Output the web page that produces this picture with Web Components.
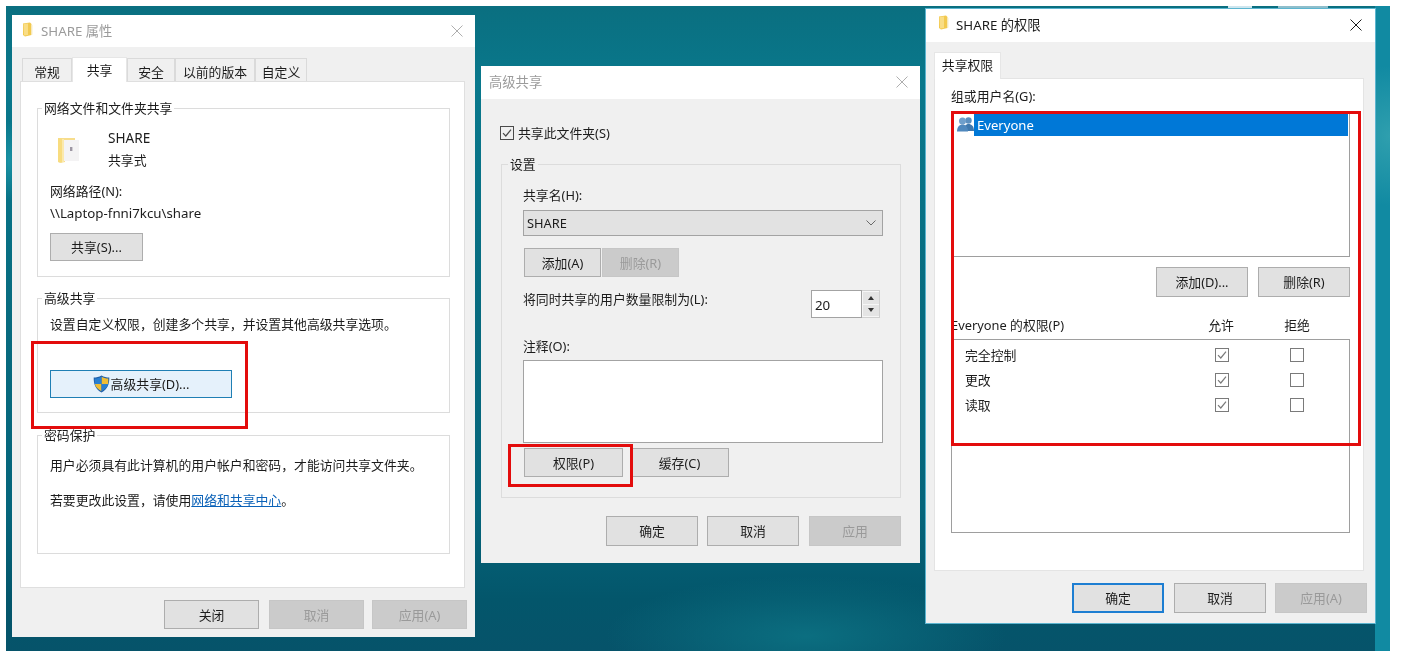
<!DOCTYPE html>
<html lang="zh-CN">
<head>
<meta charset="utf-8">
<title>SHARE</title>
<style>
html,body{margin:0;padding:0;background:#fff;width:1401px;height:659px;overflow:hidden}
</style>
</head>
<body>
<share-desktop></share-desktop>
<script>
const base = `:host{display:block;box-sizing:border-box}*,*::before,*::after{box-sizing:border-box}`;
function def(name, css, html){
  customElements.define(name, class extends HTMLElement{
    constructor(){super();
      const r=this.attachShadow({mode:'open'});
      r.innerHTML='<style>'+base+css+'</style>'+(typeof html==='function'?html(this):html);
    }
    connectedCallback(){
      const h=this.shadowRoot.querySelector('[data-heading]');
      if(h) h.textContent=this.getAttribute('heading')||'';
    }
  });
}

const FOLDER_SMALL = `<svg width="11" height="15" viewBox="0 0 11 15"><path d="M1 1.500 L8 .5 L9.500 2 V13 L3 14.500 L1 13 Z" fill="#f2c94f"/><path d="M1.500 2 L6 1.500 V13 L2 13.500 Z" fill="#f9dd85"/><path d="M9.500 2.500 L10.500 3 V12.500 L9.500 13 Z" fill="#f6eecf"/></svg>`;
const FOLDER_BIG = `<svg width="24" height="30" viewBox="0 0 24 30"><path d="M1 3 H18 V5 H8 V27 L3 28 L1 27 Z" fill="#f7dd8c"/><path d="M5 5 H22 V26 H5 Z" fill="#f4f3f4"/><path d="M1 3.500 H5 V27.500 L1 26.500 Z" fill="#f8dc7f"/><path d="M5 4 H7 V27 H5 Z" fill="#fbe9ad"/><rect x="13" y="12" width="2.400" height="4" fill="#9d97a3"/></svg>`;
const SHIELD = `<svg width="17" height="18" viewBox="0 0 17 18"><path d="M8.500 .5 C11 2 13.500 2.600 16.300 2.600 C16.500 9 14.500 14.500 8.500 17.500 C2.500 14.500 .5 9 .7 2.600 C3.500 2.600 6 2 8.500 .5Z" fill="#1f5fa8"/><path d="M8.500 1.800 V9 H15.100 C15.300 6.900 15.300 5.200 15.300 3.600 C12.700 3.500 10.600 2.900 8.500 1.800Z" fill="#f0bd34"/><path d="M8.500 9 V16.300 C4.400 14.100 2.400 11.800 1.900 9Z" fill="#f0bd34"/><path d="M8.500 1.800 V9 H1.900 C1.700 6.900 1.700 5.200 1.700 3.600 C4.300 3.500 6.400 2.900 8.500 1.800Z" fill="#2a7fd0"/><path d="M8.500 9 V16.300 C12.600 14.100 14.600 11.800 15.100 9Z" fill="#2a7fd0"/></svg>`;
const USERS = `<svg width="17" height="15" viewBox="0 0 17 15"><circle cx="11.500" cy="3.500" r="3.200" fill="#5c8fbf"/><path d="M7 13 C7 9 9 7 11.500 7 C14.500 7 17 9 17 14 H8Z" fill="#3f78ad"/><circle cx="5.500" cy="4" r="3.500" fill="#6f9fcb"/><path d="M0 14.500 C0 10 2.500 7.500 5.500 7.500 C8.500 7.500 11 10 11 14.500Z" fill="#4f88bd"/></svg>`;

def('win-close', `:host{width:12px;height:12px;color:inherit}svg{display:block}`,
  `<svg width="12" height="12" viewBox="0 0 12 12"><path d="M.5 .5 L11.500 11.500 M11.500 .5 L.5 11.500" stroke="currentColor" stroke-width="1" fill="none"/></svg>`);

def('win-frame', `
  :host{position:absolute;background:#f0f0f0;display:flex;flex-direction:column;font:12.85px/18px "Noto Sans","Noto Sans CJK SC",sans-serif;color:#1c1c1c}
  .bar{flex:none;height:var(--bar,33px);background:#fff;display:flex;align-items:center;padding-left:var(--bar-pad,8px);padding-right:var(--close-pad,12px);padding-bottom:var(--bar-up,2px);color:#1c1c1c}
  :host([inactive]) .bar{color:#9b9b9b}
  :host([inactive]) win-close{color:#aeaeae}
  .title{flex:1;font-size:13.300px}
  slot[name=icon]{display:block}
  ::slotted([slot=icon]){margin-right:var(--icon-gap,8px);line-height:0}
  win-close{flex:none}
`, `<div class="bar"><slot name="icon"></slot><span class="title" data-heading></span><win-close></win-close></div><slot></slot>`);

def('win-button', `
  :host{display:flex;align-items:center;justify-content:center;background:#e1e1e1;border:1px solid #adadad;color:#1c1c1c;height:29px;white-space:nowrap}
  :host([disabled]){background:#cbcbcb;border-color:#c6c6c6;color:#9a9a9a}
  :host([hot]){background:#e5f1fb;border-color:#1f7fb4}
  :host([focused]){border:2px solid #1d7ed2}
`, `<slot name="icon"></slot><slot></slot>`);

def('win-group', `
  fieldset{margin:0;height:100%;border:1px solid #dcdcdc;padding:0 var(--gpad,12px);min-width:0}
  legend{margin-left:var(--lm,-8px);padding:0 2px;line-height:18px;height:18px}
`, `<fieldset><legend data-heading></legend><slot></slot></fieldset>`);

def('win-check', `
  :host{width:14px;height:14px;border:1px solid var(--c,#707070);flex:none}
  svg{display:none;width:12px;height:12px}
  :host([checked]) svg{display:block}
`, `<svg viewBox="0 0 12 12"><path d="M2 6.200 L4.800 9 L10 2.600" fill="none" stroke="var(--c,#707070)" stroke-width="1.200"/></svg>`);

def('win-tab', `
  :host{display:flex;align-items:center;justify-content:center;height:23px;padding-top:3px;background:#f0f0f0;border:1px solid #dadada;border-bottom:0;white-space:nowrap}
  :host([selected]){height:25px;margin-bottom:-1px;background:#fff;padding-top:0;position:relative;z-index:2;border-color:#e6e6e6}
`, `<slot></slot>`);

def('win-combo', `
  :host{display:flex;align-items:center;height:26px;background:#e2e2e2;border:1px solid #a3a3a3;padding:0 4px 0 3px}
  .v{flex:1}
  svg{flex:none;margin-right:2px}
`, `<span class="v"><slot></slot></span><svg width="10" height="6" viewBox="0 0 10 6"><path d="M.5 .5 L5 5 L9.500 .5" stroke="#6a6a6a" fill="none"/></svg>`);

def('win-spin', `
  :host{display:flex;height:28px;width:69px}
  .v{width:51px;background:#fff;border:1px solid #a3a3a3;padding:2px 0 0 3px;line-height:24px;font-size:13.300px}
  .a{width:18px;display:flex;flex-direction:column;gap:1px;padding:1px 0 1px 1px;background:#f6f6f6;border:1px solid #cfcfcf;border-left:0}
  .a div{flex:1;background:#e4e4e4;display:flex;align-items:center;justify-content:center}
  .up{width:0;height:0;border:3.500px solid transparent;border-top:0;border-bottom:4px solid #333}
  .dn{width:0;height:0;border:3.500px solid transparent;border-bottom:0;border-top:4px solid #333}
`, `<div class="v"><slot></slot></div><div class="a"><div><i class="up"></i></div><div><i class="dn"></i></div></div>`);

def('win-listbox', `:host{background:#fff;border:1px solid #9e9e9e}`, `<slot></slot>`);

def('user-row', `
  :host{display:flex;height:22px;padding:0 0 0 5px;margin-right:1px}
  .i{width:17px;flex:none;padding-top:3px;line-height:0}
  .t{flex:1;background:#0078d7;color:#fff;padding-left:3px;line-height:23px;font-size:13.100px}
`, `<span class="i">${USERS}</span><span class="t"><slot></slot></span>`);

def('perm-row', `
  :host{display:grid;grid-template-columns:1fr 74px 76px;height:25px;align-items:center;justify-items:center;padding-left:13px;padding-right:14px}
  .n{justify-self:start}
`, h=>`<span class="n"><slot></slot></span><win-check style="--c:#7a7a7a" ${h.hasAttribute('allow')?'checked':''}></win-check><win-check style="--c:#7a7a7a"></win-check>`);

def('red-mark', `:host{position:absolute;border:3px solid #e30c0c;pointer-events:none;z-index:5}`, ``);

def('props-dialog', `
  .strip{display:flex;align-items:flex-end;height:34px;padding-left:10px;position:relative;z-index:2}
  .panel{margin:0 10px 0 8px;height:507px;background:#fff;border:1px solid #dfdfdf;padding:17px 14px 0 16px}
  win-group{height:178px}
  .g2{height:124px;margin-top:12px}
  .g3{height:128px;margin-top:13px}
  .head{display:flex;padding-top:10px}
  .ic{width:58px;padding:8px 0 0 7px;line-height:0}
  .l{line-height:22px;white-space:nowrap}
  .big{font-size:13.600px}
  .path{font-size:13.300px}
  .mt9{margin-top:9px}
  .p6{margin-top:6px}
  .m10{margin-top:10px}
  .m13{margin-top:13px}
  a{color:#0b62b8;text-decoration:underline}
  .share{width:93px;height:28px;margin-top:9px}
  .adv{width:182px;height:28px;margin-top:35px}
  .foot{display:flex;justify-content:flex-end;padding:12px 8px 0 0}
  .foot win-button{width:95px}
  .foot .b2{margin-left:10px}
  .foot .b3{margin-left:8px}
`, `
  <div class="strip">
    <win-tab style="width:50px">常规</win-tab>
    <win-tab selected style="width:55px">共享</win-tab>
    <win-tab style="width:48px">安全</win-tab>
    <win-tab style="width:80px">以前的版本</win-tab>
    <win-tab style="width:52px">自定义</win-tab>
  </div>
  <div class="panel">
    <win-group heading="网络文件和文件夹共享">
      <div class="head"><div class="ic">${FOLDER_BIG}</div><div><div class="l big">SHARE</div><div class="l">共享式</div></div></div>
      <div class="l mt9">网络路径(N):</div>
      <div class="l path">\\\\Laptop-fnni7kcu\\share</div>
      <win-button class="share">共享(S)...</win-button>
    </win-group>
    <win-group class="g2" heading="高级共享">
      <div class="l p6">设置自定义权限，创建多个共享，并设置其他高级共享选项。</div>
      <win-button class="adv" hot><span slot="icon" style="line-height:0;margin-right:1px">${SHIELD}</span>高级共享(D)...</win-button>
    </win-group>
    <win-group class="g3" heading="密码保护">
      <div class="l m10">用户必须具有此计算机的用户帐户和密码，才能访问共享文件夹。</div>
      <div class="l m13">若要更改此设置，请使用<a>网络和共享中心</a>。</div>
    </win-group>
  </div>
  <div class="foot"><win-button>关闭</win-button><win-button class="b2" disabled>取消</win-button><win-button class="b3" disabled>应用(A)</win-button></div>
`);

def('advanced-dialog', `
  :host{padding:0 19px 0 19px}
  .chk{display:flex;align-items:center;height:22px;margin-top:23px;gap:4px;--c:#4a4a4a}
  win-group{height:343px;margin:11px 0 0 1px;--gpad:21px;--lm:-15px}
  .l{line-height:22px;white-space:nowrap}
  .m11{margin-top:11px}
  win-combo{margin-top:4px;width:360px}
  .row{display:flex;margin:12px 0 0 1px}
  .row win-button{height:29px;width:77px}
  .row win-button+win-button{margin-left:1px}
  .lim{display:flex;justify-content:space-between;width:357px;height:28px;margin-top:13px;line-height:18px}
  .m17{margin-top:17px}
  .memo{margin-top:3px;width:360px;height:83px;background:#fff;border:1px solid #a3a3a3}
  .row2{display:flex;margin:5px 0 0 1px;gap:7px}
  .row2 win-button{width:99px}
  .foot{display:flex;justify-content:flex-end;margin-top:18px}
  .foot win-button{width:92px;height:30px}
  .foot .b2{margin-left:9px}
  .foot .b3{margin-left:10px}
`, `
  <div class="chk"><win-check checked></win-check><span>共享此文件夹(S)</span></div>
  <win-group heading="设置">
    <div class="l m11">共享名(H):</div>
    <win-combo>SHARE</win-combo>
    <div class="row"><win-button>添加(A)</win-button><win-button disabled>删除(R)</win-button></div>
    <div class="lim"><span>将同时共享的用户数量限制为(L):</span><win-spin>20</win-spin></div>
    <div class="l m17">注释(O):</div>
    <div class="memo"></div>
    <div class="row2"><win-button>权限(P)</win-button><win-button>缓存(C)</win-button></div>
  </win-group>
  <div class="foot"><win-button>确定</win-button><win-button class="b2">取消</win-button><win-button class="b3" disabled>应用</win-button></div>
`);

def('perm-dialog', `
  .strip{display:flex;align-items:flex-end;height:36px;position:relative;z-index:2;padding-left:8px}
  .strip win-tab{width:67px;height:27px;padding:0 0 2px}
  .panel{margin:0 11px 0 8px;height:493px;background:#fff;border:1px solid #e4e4e4;padding:6px 13px 0 16px}
  .l{line-height:22px}
  .users{height:144px;margin-top:6px}
  .act{display:flex;justify-content:flex-end;gap:10px;margin-top:10px}
  .act win-button{width:92px;height:30px}
  .hdr{display:grid;grid-template-columns:1fr 76px 76px 15px;margin-top:19px;height:18px;line-height:18px;justify-items:center}
  .hdr span:first-child{justify-self:start}
  .perms{height:194px;margin-top:5px;padding-top:2px}
  .foot{display:flex;justify-content:flex-end;padding:12px 8px 0 0}
  .foot win-button{width:92px;height:30px}
  .foot .b2{margin-left:10px}
  .foot .b3{margin-left:9px}
`, `
  <div class="strip"><win-tab selected>共享权限</win-tab></div>
  <div class="panel">
    <div class="l">组或用户名(G):</div>
    <win-listbox class="users"><user-row>Everyone</user-row></win-listbox>
    <div class="act"><win-button>添加(D)...</win-button><win-button>删除(R)</win-button></div>
    <div class="hdr"><span>Everyone 的权限(P)</span><span>允许</span><span>拒绝</span><i></i></div>
    <win-listbox class="perms">
      <perm-row allow>完全控制</perm-row>
      <perm-row allow>更改</perm-row>
      <perm-row allow>读取</perm-row>
    </win-listbox>
  </div>
  <div class="foot"><win-button focused>确定</win-button><win-button class="b2">取消</win-button><win-button class="b3" disabled>应用(A)</win-button></div>
`);

def('share-desktop', `
  :host{position:relative;width:1384px;height:645px;margin:6px 0 0 6px;overflow:hidden;filter:blur(.35px);
    background:
      linear-gradient(#cfe6ee,#cfe6ee) 1222px 0/24px 2px no-repeat,
      linear-gradient(#8fbecb,#8fbecb) 1272px 0/50px 2px no-repeat,
      radial-gradient(60px 70px at 1384px 130px,#2f9fae,transparent),
      linear-gradient(90deg,transparent 98.900%,#118aa2 98.900%),
      radial-gradient(200px 60px at 800px 630px,#0b6e80,transparent),
      radial-gradient(10px 40px at 3px 155px,#1a93a5,transparent),
      linear-gradient(#0a6f80 0,#09788c 12%,#076a7e 50%,#05657b 78%,#03566b 92%,#06536a 100%);
  }
  win-frame:nth-of-type(3){box-shadow:0 0 0 1px #5cb5d0}
`, `
  <win-frame heading="SHARE 属性" inactive style="left:6px;top:9px;width:463px;height:622px;--bar:32px;--bar-up:0px;--bar-pad:10px;--close-pad:12px;--icon-gap:8px">
    <span slot="icon">${FOLDER_SMALL}</span>
    <props-dialog></props-dialog>
  </win-frame>
  <win-frame heading="高级共享" inactive style="left:475px;top:60px;width:439px;height:497px;--close-pad:12px">
    <advanced-dialog></advanced-dialog>
  </win-frame>
  <win-frame heading="SHARE 的权限" style="left:920px;top:3px;width:449px;height:614px;--bar-pad:12px;--close-pad:13px;--icon-gap:7px">
    <span slot="icon">${FOLDER_SMALL}</span>
    <perm-dialog></perm-dialog>
  </win-frame>
  <red-mark style="left:25px;top:335px;width:217px;height:88px"></red-mark>
  <red-mark style="left:502px;top:438px;width:125px;height:43px"></red-mark>
  <red-mark style="left:945px;top:105px;width:410px;height:335px"></red-mark>
`);
</script>
</body>
</html>
